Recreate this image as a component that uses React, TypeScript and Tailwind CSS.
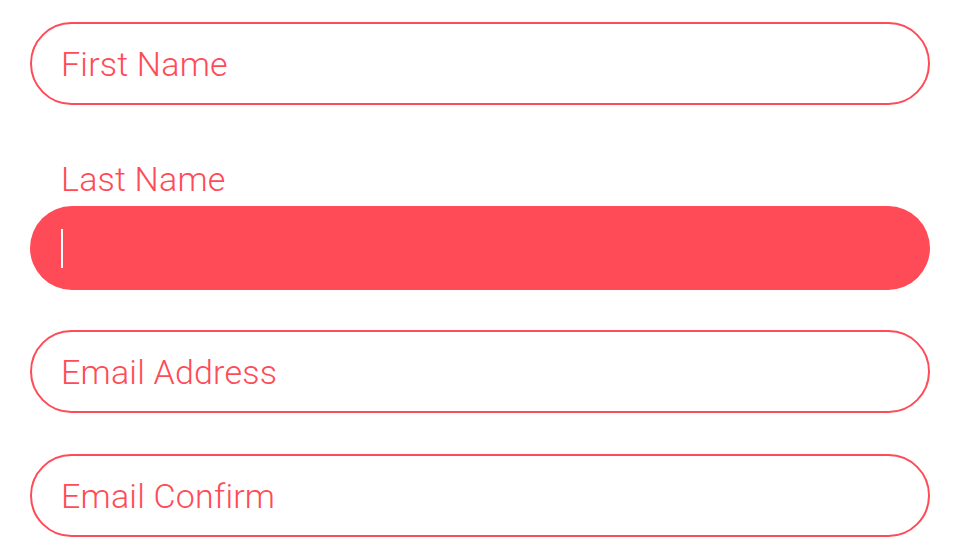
import React from 'react';

const font = { fontFamily: 'Roboto, "Liberation Sans", sans-serif' };

const Field: React.FC<{ placeholder: string }> = ({ placeholder }) => (
  <input
    type="text"
    placeholder={placeholder}
    style={font}
    className="block w-full h-[83px] rounded-full border-2 border-[#ff4a57] bg-white pl-[29px] pr-6 text-[34px] font-light tracking-[0.2px] text-[#ff4a57] placeholder:text-[#ff4a57] outline-none"
  />
);

export default function App() {
  return (
    <div className="w-[966px] h-[550px] bg-white pl-[30px] pr-[36px] pt-[22px] overflow-hidden" style={font}>
      <Field placeholder="First Name" />

      {/* focused field, label floats above */}
      <div className="h-[101px] flex items-end pl-[31px] pb-[10px]">
        <span className="text-[34px] font-light leading-none tracking-[0.2px] text-[#ff4a57]">Last Name</span>
      </div>
      <div className="h-[84px] rounded-full bg-[#ff4a57] flex items-center pl-[31px]">
        <div className="w-[2px] h-[39px] bg-white" />
      </div>

      <div className="mt-[40px]">
        <Field placeholder="Email Address" />
      </div>
      <div className="mt-[41px]">
        <Field placeholder="Email Confirm" />
      </div>
    </div>
  );
}
